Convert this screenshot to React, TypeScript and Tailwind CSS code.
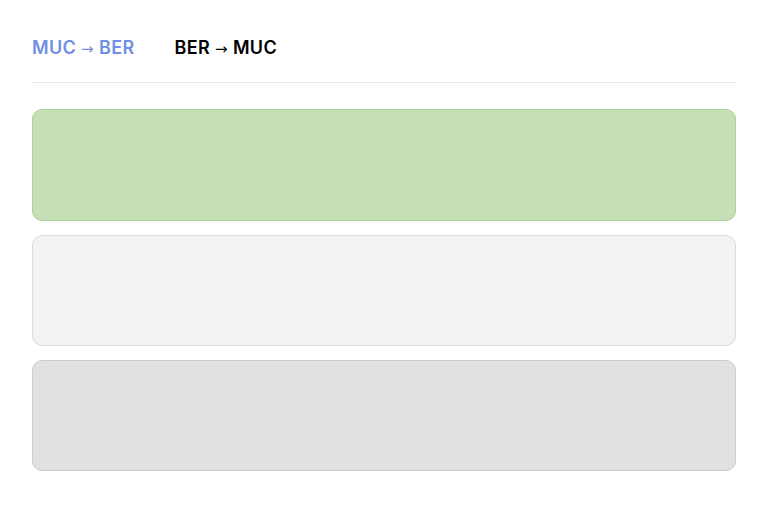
import React from 'react';

const App: React.FC = () => {
  const tabs = [
    { from: 'MUC', to: 'BER', active: true },
    { from: 'BER', to: 'MUC', active: false },
  ];

  return (
    <div className="min-h-[510px] bg-white px-8 pt-[35px]" style={{ fontFamily: 'Inter, "Noto Sans", sans-serif' }}>
      <div className="flex gap-10 pb-[20px] border-b border-[#e8e8e8]">
        {tabs.map((t) => (
          <span
            key={t.from}
            className={`text-[18px] font-semibold leading-[26px] tracking-[0.02em] ${t.active ? 'text-[#6f8fe3]' : 'text-black'}`}
          >
            {t.from}{' '}
            <span className="text-[15px] font-normal" style={{ fontFamily: '"DejaVu Sans", sans-serif' }}>→</span>{' '}
            {t.to}
          </span>
        ))}
      </div>

      <div className="flex flex-col gap-[14px] mt-[26px]">
        <div className="h-[112px] rounded-[10px] bg-[#c5e0b5] border border-[#aecf9c]"></div>
        <div className="h-[111px] rounded-[10px] bg-[#f2f2f2] border border-[#dcdcdc]"></div>
        <div className="h-[111px] rounded-[10px] bg-[#e1e1e1] border border-[#cccccc]"></div>
      </div>
    </div>
  );
};

export default App;
